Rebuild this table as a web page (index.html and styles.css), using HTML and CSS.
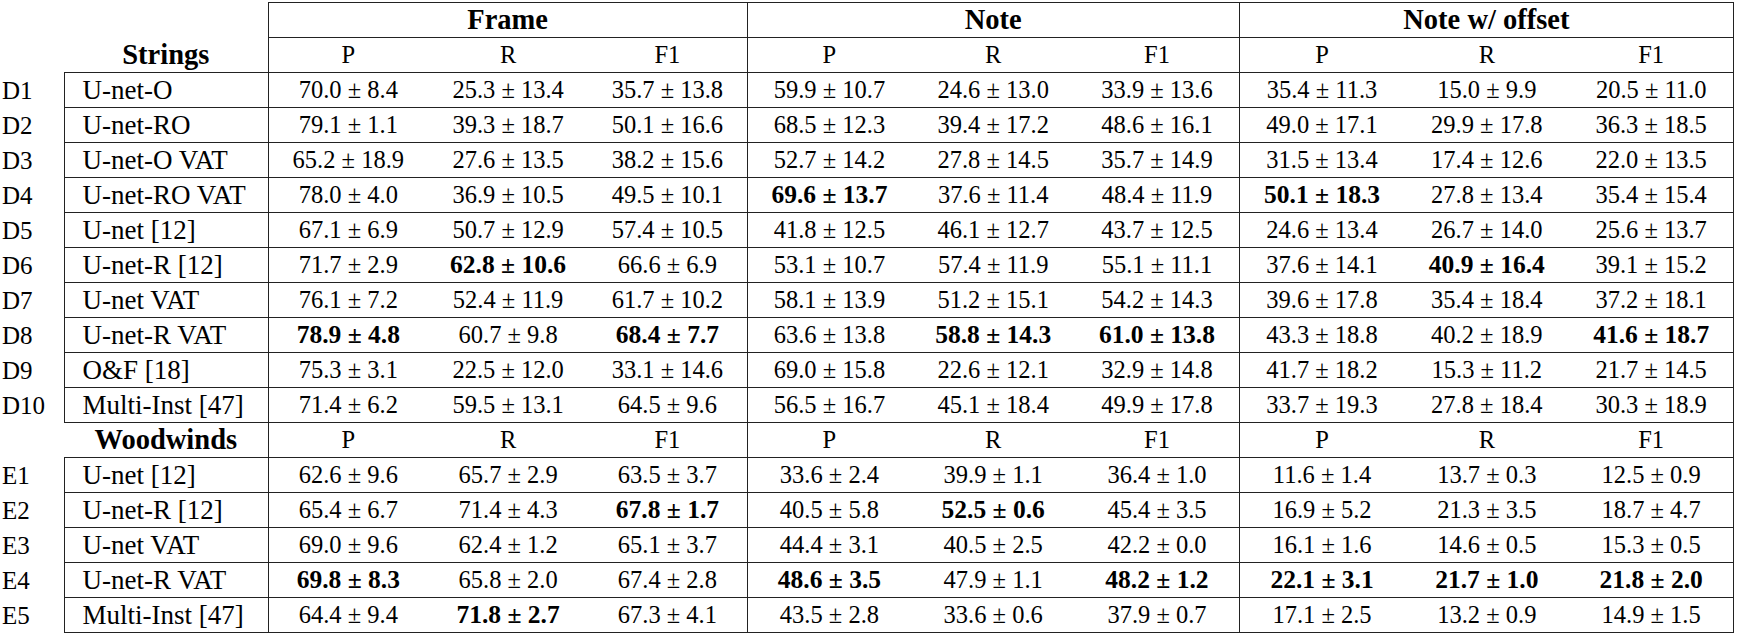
FILE: index.html
```html
<!DOCTYPE html>
<html lang="en">
<head>
    <meta charset="UTF-8">
    <title>Transcription results</title>
    <link rel="stylesheet" href="styles.css">
</head>
<body>
    <table class="results">
        <colgroup>
            <col class="c-id">
            <col class="c-method">
            <col class="c-f"><col class="c-f"><col class="c-f2">
            <col class="c-n"><col class="c-n"><col class="c-n">
            <col class="c-o"><col class="c-o"><col class="c-o2">
        </colgroup>
        <tr class="groups">
            <td></td>
            <td class="corner"></td>
            <th colspan="3" class="grp">Frame</th>
            <th colspan="3" class="grp">Note</th>
            <th colspan="3" class="grp">Note w/ offset</th>
        </tr>
        <tr class="sub">
            <td></td>
            <th class="section">Strings</th>
            <td class="g">P</td><td>R</td><td>F1</td>
            <td class="g">P</td><td>R</td><td>F1</td>
            <td class="g">P</td><td>R</td><td class="last">F1</td>
        </tr>
        <tr><td class="id">D1</td><td class="m">U-net-O</td>
            <td class="g">70.0 ± 8.4</td><td>25.3 ± 13.4</td><td>35.7 ± 13.8</td>
            <td class="g">59.9 ± 10.7</td><td>24.6 ± 13.0</td><td>33.9 ± 13.6</td>
            <td class="g">35.4 ± 11.3</td><td>15.0 ± 9.9</td><td class="last">20.5 ± 11.0</td></tr>
        <tr><td class="id">D2</td><td class="m">U-net-RO</td>
            <td class="g">79.1 ± 1.1</td><td>39.3 ± 18.7</td><td>50.1 ± 16.6</td>
            <td class="g">68.5 ± 12.3</td><td>39.4 ± 17.2</td><td>48.6 ± 16.1</td>
            <td class="g">49.0 ± 17.1</td><td>29.9 ± 17.8</td><td class="last">36.3 ± 18.5</td></tr>
        <tr><td class="id">D3</td><td class="m">U-net-O VAT</td>
            <td class="g">65.2 ± 18.9</td><td>27.6 ± 13.5</td><td>38.2 ± 15.6</td>
            <td class="g">52.7 ± 14.2</td><td>27.8 ± 14.5</td><td>35.7 ± 14.9</td>
            <td class="g">31.5 ± 13.4</td><td>17.4 ± 12.6</td><td class="last">22.0 ± 13.5</td></tr>
        <tr><td class="id">D4</td><td class="m">U-net-RO VAT</td>
            <td class="g">78.0 ± 4.0</td><td>36.9 ± 10.5</td><td>49.5 ± 10.1</td>
            <td class="g best">69.6 ± 13.7</td><td>37.6 ± 11.4</td><td>48.4 ± 11.9</td>
            <td class="g best">50.1 ± 18.3</td><td>27.8 ± 13.4</td><td class="last">35.4 ± 15.4</td></tr>
        <tr><td class="id">D5</td><td class="m">U-net [12]</td>
            <td class="g">67.1 ± 6.9</td><td>50.7 ± 12.9</td><td>57.4 ± 10.5</td>
            <td class="g">41.8 ± 12.5</td><td>46.1 ± 12.7</td><td>43.7 ± 12.5</td>
            <td class="g">24.6 ± 13.4</td><td>26.7 ± 14.0</td><td class="last">25.6 ± 13.7</td></tr>
        <tr><td class="id">D6</td><td class="m">U-net-R [12]</td>
            <td class="g">71.7 ± 2.9</td><td class="best">62.8 ± 10.6</td><td>66.6 ± 6.9</td>
            <td class="g">53.1 ± 10.7</td><td>57.4 ± 11.9</td><td>55.1 ± 11.1</td>
            <td class="g">37.6 ± 14.1</td><td class="best">40.9 ± 16.4</td><td class="last">39.1 ± 15.2</td></tr>
        <tr><td class="id">D7</td><td class="m">U-net VAT</td>
            <td class="g">76.1 ± 7.2</td><td>52.4 ± 11.9</td><td>61.7 ± 10.2</td>
            <td class="g">58.1 ± 13.9</td><td>51.2 ± 15.1</td><td>54.2 ± 14.3</td>
            <td class="g">39.6 ± 17.8</td><td>35.4 ± 18.4</td><td class="last">37.2 ± 18.1</td></tr>
        <tr><td class="id">D8</td><td class="m">U-net-R VAT</td>
            <td class="g best">78.9 ± 4.8</td><td>60.7 ± 9.8</td><td class="best">68.4 ± 7.7</td>
            <td class="g">63.6 ± 13.8</td><td class="best">58.8 ± 14.3</td><td class="best">61.0 ± 13.8</td>
            <td class="g">43.3 ± 18.8</td><td>40.2 ± 18.9</td><td class="last best">41.6 ± 18.7</td></tr>
        <tr><td class="id">D9</td><td class="m">O&amp;F [18]</td>
            <td class="g">75.3 ± 3.1</td><td>22.5 ± 12.0</td><td>33.1 ± 14.6</td>
            <td class="g">69.0 ± 15.8</td><td>22.6 ± 12.1</td><td>32.9 ± 14.8</td>
            <td class="g">41.7 ± 18.2</td><td>15.3 ± 11.2</td><td class="last">21.7 ± 14.5</td></tr>
        <tr><td class="id">D10</td><td class="m">Multi-Inst [47]</td>
            <td class="g">71.4 ± 6.2</td><td>59.5 ± 13.1</td><td>64.5 ± 9.6</td>
            <td class="g">56.5 ± 16.7</td><td>45.1 ± 18.4</td><td>49.9 ± 17.8</td>
            <td class="g">33.7 ± 19.3</td><td>27.8 ± 18.4</td><td class="last">30.3 ± 18.9</td></tr>
        <tr class="sub">
            <td></td>
            <th class="section">Woodwinds</th>
            <td class="g">P</td><td>R</td><td>F1</td>
            <td class="g">P</td><td>R</td><td>F1</td>
            <td class="g">P</td><td>R</td><td class="last">F1</td>
        </tr>
        <tr><td class="id">E1</td><td class="m">U-net [12]</td>
            <td class="g">62.6 ± 9.6</td><td>65.7 ± 2.9</td><td>63.5 ± 3.7</td>
            <td class="g">33.6 ± 2.4</td><td>39.9 ± 1.1</td><td>36.4 ± 1.0</td>
            <td class="g">11.6 ± 1.4</td><td>13.7 ± 0.3</td><td class="last">12.5 ± 0.9</td></tr>
        <tr><td class="id">E2</td><td class="m">U-net-R [12]</td>
            <td class="g">65.4 ± 6.7</td><td>71.4 ± 4.3</td><td class="best">67.8 ± 1.7</td>
            <td class="g">40.5 ± 5.8</td><td class="best">52.5 ± 0.6</td><td>45.4 ± 3.5</td>
            <td class="g">16.9 ± 5.2</td><td>21.3 ± 3.5</td><td class="last">18.7 ± 4.7</td></tr>
        <tr><td class="id">E3</td><td class="m">U-net VAT</td>
            <td class="g">69.0 ± 9.6</td><td>62.4 ± 1.2</td><td>65.1 ± 3.7</td>
            <td class="g">44.4 ± 3.1</td><td>40.5 ± 2.5</td><td>42.2 ± 0.0</td>
            <td class="g">16.1 ± 1.6</td><td>14.6 ± 0.5</td><td class="last">15.3 ± 0.5</td></tr>
        <tr><td class="id">E4</td><td class="m">U-net-R VAT</td>
            <td class="g best">69.8 ± 8.3</td><td>65.8 ± 2.0</td><td>67.4 ± 2.8</td>
            <td class="g best">48.6 ± 3.5</td><td>47.9 ± 1.1</td><td class="best">48.2 ± 1.2</td>
            <td class="g best">22.1 ± 3.1</td><td class="best">21.7 ± 1.0</td><td class="last best">21.8 ± 2.0</td></tr>
        <tr><td class="id">E5</td><td class="m">Multi-Inst [47]</td>
            <td class="g">64.4 ± 9.4</td><td class="best">71.8 ± 2.7</td><td>67.3 ± 4.1</td>
            <td class="g">43.5 ± 2.8</td><td>33.6 ± 0.6</td><td>37.9 ± 0.7</td>
            <td class="g">17.1 ± 2.5</td><td>13.2 ± 0.9</td><td class="last">14.9 ± 1.5</td></tr>
    </table>
</body>
</html>
```

FILE: styles.css
```css
body {
    margin: 0;
    background: #fff;
    color: #000;
    font-family: 'Liberation Serif', 'Times New Roman', serif;
    font-size: 24.5px;
}

.results {
    border-collapse: collapse;
    table-layout: fixed;
    width: 1734px;
    margin-top: 2px;
}

.c-id { width: 64px; }
.c-method { width: 204px; }
.c-f { width: 160px; }
.c-f2 { width: 159px; }
.c-n { width: 164px; }
.c-o { width: 165px; }
.c-o2 { width: 164px; }

.results tr {
    height: 35px;
}

.results td,
.results th {
    padding: 0;
    line-height: 1;
    text-align: center;
    vertical-align: middle;
    white-space: nowrap;
    border-top: 1px solid #222;
    border-bottom: 1px solid #222;
}

.results th {
    font-size: 28.5px;
    font-weight: bold;
}

.results td.g,
.results th.grp {
    border-left: 1px solid #222;
}

.results td.last,
.results th.grp {
    border-right: 1px solid #222;
}

.results td:first-child {
    border: none;
}

.results td.id {
    text-align: left;
    padding-left: 2px;
    font-size: 25px;
}

.results td.m {
    text-align: left;
    padding-left: 18px;
    font-size: 27px;
    border-left: 1px solid #222;
    border-right: 1px solid #222;
}

.results td.corner,
.results th.section {
    border-top: none;
    border-right: 1px solid #222;
}

.results th.section {
    border-bottom: 1px solid #222;
}

.groups td.corner {
    border-bottom: none;
}

.results .best {
    font-weight: bold;
    font-size: 25.5px;
}
```
